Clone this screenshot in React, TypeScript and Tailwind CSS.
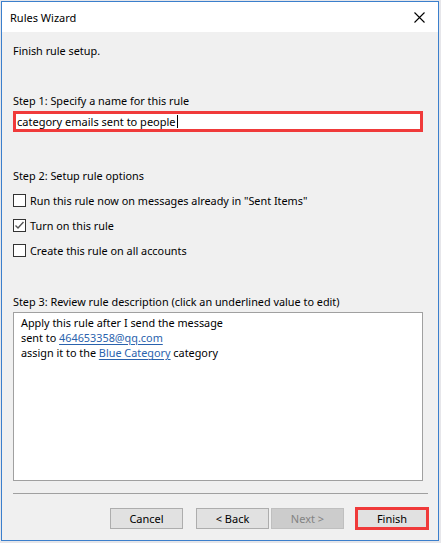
import React from "react";

const font = { fontFamily: '"Noto Sans", "Open Sans", sans-serif' };

function Checkbox({ checked }: { checked?: boolean }) {
  return (
    <div className="w-[13px] h-[13px] border border-[#333333] bg-white flex items-center justify-center shrink-0">
      {checked && (
        <svg width="11" height="11" viewBox="0 0 11 11">
          <path d="M1.5 5.5 L4 8 L9.5 2" fill="none" stroke="#555555" strokeWidth="1.4" />
        </svg>
      )}
    </div>
  );
}

function Btn({ children, disabled }: { children: React.ReactNode; disabled?: boolean }) {
  return (
    <div
      className={
        "h-[21px] w-[73px] flex items-center justify-center border text-[11px] " +
        (disabled
          ? "bg-[#cccccc] border-[#bfbfbf] text-[#838383]"
          : "bg-[#e1e1e1] border-[#adadad] text-black")
      }
    >
      {children}
    </div>
  );
}

export default function App() {
  return (
    <div className="w-[441px] h-[543px] bg-[#e6e6ea] pt-[1px] pl-[1px]" style={font}>
      <div className="w-[438px] h-[540px] border border-[#3b7fcc] flex flex-col bg-[#f0f0f0]">
        {/* title bar */}
        <div className="h-[30px] bg-white flex items-center justify-between pl-[8px] pr-[13px] shrink-0">
          <span className="text-[11px] text-black leading-none">Rules Wizard</span>
          <svg width="11" height="11" viewBox="0 0 11 11">
            <path d="M0.5 0.5 L10.5 10.5 M10.5 0.5 L0.5 10.5" stroke="#000" strokeWidth="1.1" />
          </svg>
        </div>

        {/* body */}
        <div className="flex-1 flex flex-col pl-[11px] text-[10.85px] text-black leading-[16px]">
          <div className="mt-[11px] h-[16px]">Finish rule setup.</div>

          <div className="mt-[34px] h-[16px]">Step 1: Specify a name for this rule</div>
          <div className="mt-[2px] w-[410px] h-[21px] border-[3px] border-[#f03a3a] bg-white flex items-center pl-[1px]">
            <span className="leading-none text-[11px]">category emails sent to people</span>
            <span className="inline-block w-[1px] h-[13px] bg-black ml-[1px]" />
          </div>

          <div className="mt-[36px] h-[16px]">Step 2: Setup rule options</div>
          <div className="mt-[4px] flex flex-col">
            <div className="h-[25px] flex items-center gap-[4px]">
              <Checkbox />
              <span>Run this rule now on messages already in "Sent Items"</span>
            </div>
            <div className="h-[25px] flex items-center gap-[4px]">
              <Checkbox checked />
              <span>Turn on this rule</span>
            </div>
            <div className="h-[25px] flex items-center gap-[4px]">
              <Checkbox />
              <span>Create this rule on all accounts</span>
            </div>
          </div>

          <div className="mt-[31px] h-[16px]">Step 3: Review rule description (click an underlined value to edit)</div>
          <div className="mt-[2px] w-[410px] h-[169px] border border-[#a0a0a0] bg-white pl-[7px] pt-[2px] leading-[15px]">
            <div className="h-[15px]">Apply this rule after I send the message</div>
            <div className="h-[15px]">
              sent to <span className="text-[#2a62ad] underline underline-offset-2">464653358@qq.com</span>
            </div>
            <div className="h-[15px]">
              assign it to the <span className="text-[#2a62ad] underline underline-offset-2">Blue Category</span> category
            </div>
          </div>

          <div className="mt-[12px] w-[415px] h-[1px] bg-[#a0a0a0]" />

          <div className="mt-[13px] flex items-center pr-[8px]">
            <div className="ml-[97px]">
              <Btn>Cancel</Btn>
            </div>
            <div className="ml-[13px]">
              <Btn>&lt; Back</Btn>
            </div>
            <div className="ml-[2px]">
              <Btn disabled>Next &gt;</Btn>
            </div>
            <div className="ml-[11px] border-[3px] border-[#f03a3a] p-0">
              <div className="h-[17px] w-[68px] bg-[#e1e1e1] flex items-center justify-center text-[11px]">
                Finish
              </div>
            </div>
          </div>
        </div>
      </div>
    </div>
  );
}
